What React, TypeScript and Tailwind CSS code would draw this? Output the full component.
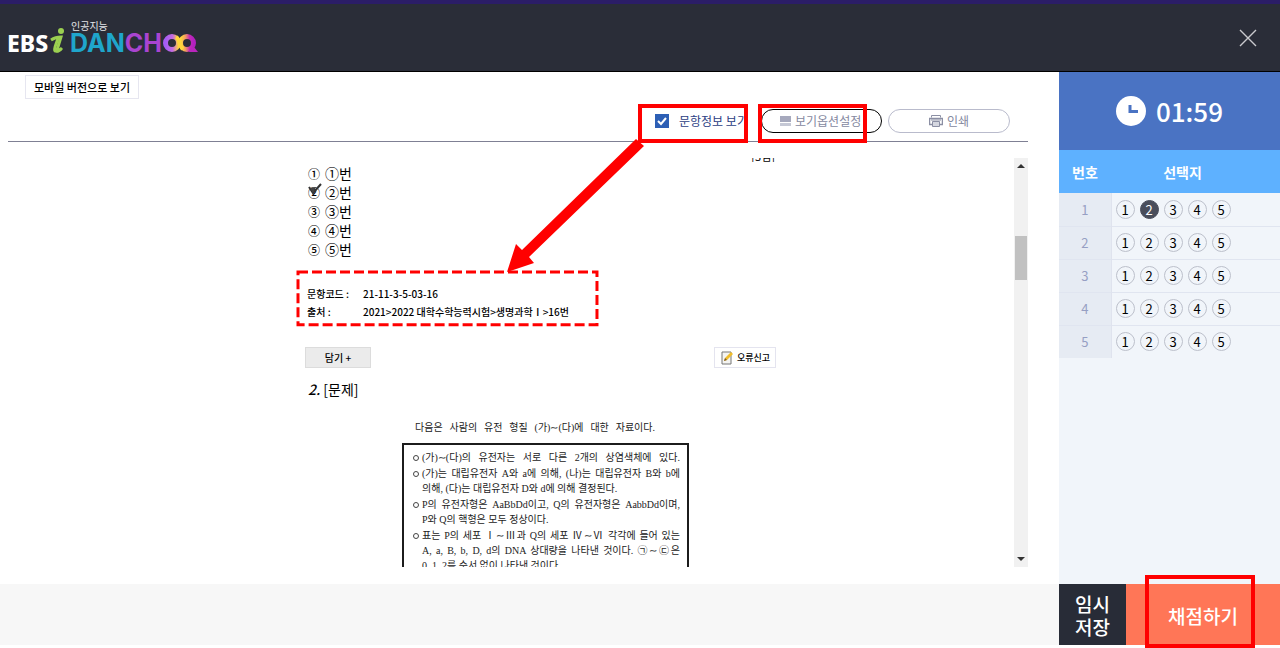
const options = ['①', '②', '③', '④', '⑤']
const questions = [1, 2, 3, 4, 5]
const choices = [1, 2, 3, 4, 5]

const passage = [
  ['(가)∼(다)의 유전자는 서로 다른 2개의 상염색체에 있다.'],
  ['(가)는 대립유전자 A와 a에 의해, (나)는 대립유전자 B와 b에', '의해, (다)는 대립유전자 D와 d에 의해 결정된다.'],
  ['P의 유전자형은 AaBbDd이고, Q의 유전자형은 AabbDd이며,', 'P와 Q의 핵형은 모두 정상이다.'],
  [
    '표는 P의 세포 Ⅰ∼Ⅲ과 Q의 세포 Ⅳ∼Ⅵ 각각에 들어 있는',
    'A, a, B, b, D, d의 DNA 상대량을 나타낸 것이다. ㉠∼㉢은',
    '0, 1, 2를 순서 없이 나타낸 것이다.',
  ],
]

function Logo() {
  return (
    <svg width="192" height="36" viewBox="0 0 192 36" className="overflow-visible" role="img" aria-label="EBSi DANCHOO">
      <defs>
        <linearGradient id="ringLeft" x1="0" y1="0" x2="1" y2="0">
          <stop offset="0" stopColor="#a65cf5" />
          <stop offset="0.55" stopColor="#c56be0" />
          <stop offset="1" stopColor="#ffd23e" />
        </linearGradient>
        <linearGradient id="ringRight" x1="0" y1="0" x2="1" y2="0">
          <stop offset="0" stopColor="#ffdb3a" />
          <stop offset="0.35" stopColor="#f5a45a" />
          <stop offset="0.7" stopColor="#c42ab8" />
          <stop offset="1" stopColor="#b320c0" />
        </linearGradient>
      </defs>
      <text x="-1" y="32" fill="#fff" fontSize="23" fontWeight="800" fontFamily="Noto Sans, sans-serif">EBS</text>
      <path d="M43 20c3-2 6-3 10-3l-4 13c0 2 2 1 4-1" fill="none" stroke="#9bd051" strokeWidth="3" />
      <path d="M50 18c-1 5-5 11-3 13 2 1 5-1 7-3" fill="none" stroke="#9bd051" strokeWidth="3" />
      <circle cx="53" cy="11" r="3" fill="#9bd051" />
      <text x="63" y="10" fill="#e4e5e8" fontSize="10" fontFamily="Noto Sans CJK KR, sans-serif">인공지능</text>
      <text x="62" y="32" fontSize="25" fontWeight="700" fontFamily="Inter, sans-serif">
        <tspan fill="#1fa5cb">DAN</tspan><tspan fill="#a944d0">CH</tspan>
      </text>
      <circle cx="164" cy="23" r="6.500" fill="none" stroke="url(#ringLeft)" strokeWidth="5" />
      <circle cx="179" cy="23" r="6.500" fill="none" stroke="url(#ringRight)" strokeWidth="5" />
      <path d="M168 17c4 2 3 9 7 12" fill="none" stroke="#ffd53c" strokeWidth="4" />
      <path d="M182 29l4-2 4 5h-9z" fill="#b925bd" />
    </svg>
  )
}

function Header() {
  return (
    <header className="flex h-18 shrink-0 items-center justify-between border-t-4 border-b border-t-[#2b1d67] border-b-black bg-[#2a2d38] pr-5 pl-2">
      <a href="#home">
        <Logo />
      </a>
      <button type="button" aria-label="닫기" className="p-1">
        <svg className="size-4 overflow-visible" viewBox="0 0 16 16" stroke="#c9cace" strokeWidth="1.4">
          <path d="M0 0l16 16M16 0L0 16" />
        </svg>
      </button>
    </header>
  )
}

function Toolbar() {
  return (
    <div className="relative mr-[31px] ml-2 shrink-0 border-b border-[#7f8094] pt-[3px]">
      <button type="button" className="ml-[17px] block h-6 border border-[#e6e6f0] px-2 text-[11px] leading-none font-medium text-black">
        모바일 버전으로 보기
      </button>
      <div className="mt-[10px] mb-2 flex h-6 items-center justify-end gap-1.5 pr-[18px] text-xs">
        <div className="relative mr-[10px] flex items-center">
          <input id="info" type="checkbox" defaultChecked className="size-[14px] appearance-none bg-[#2d5fb5]" />
          <svg className="pointer-events-none absolute left-0 size-[14px]" viewBox="0 0 14 14" fill="none" stroke="#fff" strokeWidth="2">
            <path d="M3 7l3 3 5-6" />
          </svg>
          <label htmlFor="info" className="ml-[10px] w-[66px] overflow-hidden whitespace-nowrap text-[#2c4083]">
            문항정보 보기
          </label>
          <span className="absolute -top-[9px] -right-[3px] -left-[17px] h-[39px] border-4 border-[#ff0000]" />
        </div>
        <div className="relative">
          <button type="button" className="flex h-6 w-[121px] items-center gap-1 rounded-full border border-black pl-[18px] text-[#85899f]">
            <svg width="11" height="10" viewBox="0 0 11 10">
              <path fill="#a6a9bd" d="M0 0h11v6H0z" />
              <path fill="#c5c8d5" d="M0 7h11v3H0z" />
            </svg>
            보기옵션설정
          </button>
          <span className="absolute -top-[5px] -left-[3px] h-[39px] w-[109px] border-4 border-[#ff0000]" />
        </div>
        <button type="button" className="flex h-6 w-[122px] items-center justify-center gap-1 rounded-full border border-[#b9bbcc] text-[#85899f]">
          <svg width="14" height="12" viewBox="0 0 14 12" fill="none" stroke="#8b8fa4">
            <path d="M2.500 2.500v-2h9v2" />
            <path d="M3 9.500H.5v-6h13v6H11" strokeWidth="1.500" />
            <path d="M3.500 6.500h7v5h-7z" fill="#d5d7e0" />
            <path d="M2 5h10" />
          </svg>
          인쇄
        </button>
      </div>
    </div>
  )
}

function AnswerOptions() {
  return (
    <ul className="mt-0.5 pl-[3px] text-black">
      {options.map((mark, i) => (
        <li key={mark} className="h-[19px]">
          <label className="relative flex w-fit items-center gap-[5px] text-sm leading-[19px]">
            <input type="radio" name="answer" defaultChecked={i === 1} className="sr-only" />
            <span className="text-xs leading-[19px] font-medium">{mark}</span>
            <span>{mark}번</span>
            {i === 1 && (
              <svg className="absolute top-px left-0 overflow-visible" width="14" height="14" viewBox="0 0 14 14">
                <path d="M1 3l4 6 8-9" fill="none" stroke="#333" strokeWidth="2" />
                <path d="M2 4l6-1-3 6z" fill="#444" />
              </svg>
            )}
          </label>
        </li>
      ))}
    </ul>
  )
}

function QuestionInfo() {
  return (
    <div className="relative -ml-[9px] mt-3 h-14 w-[302px] pt-[14px] pl-[11px] text-[10px] leading-[18px] font-medium text-black">
      <svg className="absolute inset-0 size-full overflow-visible">
        <rect x="2" y="1" width="99%" height="94%" fill="none" stroke="#ff0000" strokeWidth="3" strokeDasharray="10 4" />
      </svg>
      <dl className="relative grid grid-cols-[56px_1fr]">
        <dt>문항코드 :</dt>
        <dd>21-11-3-5-03-16</dd>
        <dt>출처 :</dt>
        <dd className="whitespace-nowrap">2021&gt;2022 대학수학능력시험&gt;생명과학Ⅰ&gt;16번</dd>
      </dl>
    </div>
  )
}

function Scrollbar() {
  return (
    <div className="flex w-[14px] shrink-0 flex-col items-center justify-between bg-[#f1f1f1] py-1.5">
      <svg width="8" height="4" viewBox="0 0 8 4">
        <path d="M4 0l4 4H0z" fill="#333" />
      </svg>
      <div className="flex w-full flex-1 flex-col items-center pt-[68px]">
        <div className="h-11 w-3 bg-[#c1c1c1]" />
      </div>
      <svg width="8" height="4" viewBox="0 0 8 4">
        <path d="M4 4l4-4H0z" fill="#333" />
      </svg>
    </div>
  )
}

function Passage() {
  return (
    <div className="mt-[21px] ml-[97px] w-[287px] font-['Liberation_Serif','Noto_Sans_CJK_KR',serif] text-[10px] leading-[15px] text-[#222]">
      <p className="ml-[13px] w-60 [text-align-last:justify]">다음은 사람의 유전 형질 (가)∼(다)에 대한 자료이다.</p>
      <ul className="mt-2 flex h-60 flex-col gap-px border-2 border-[#1c1c1c] pt-[5px] pr-[7px] pl-[9px]">
        {passage.map((lines, n) => (
          <li key={n} className="flex gap-[3px]">
            <span className="mt-[5px] size-1.5 shrink-0 rounded-full border border-[#444]" />
            <p className="flex-1">
              {lines.map((line, i) => (
                <span key={line} className={i > 0 && i === lines.length - 1 ? 'block' : 'block [text-align-last:justify]'}>
                  {line}
                </span>
              ))}
            </p>
          </li>
        ))}
      </ul>
    </div>
  )
}

function QuestionPaper() {
  return (
    <div className="mt-4 mr-[31px] mb-[17px] ml-2 flex min-h-0 flex-1">
      <div className="flex-1 overflow-hidden">
        <div className="ml-[297px] w-[471px]">
          <div className="flex h-1 items-end justify-end overflow-hidden pr-px text-[11px] leading-3">[3점]</div>
          <AnswerOptions />
          <QuestionInfo />
          <div className="mt-5 flex justify-between">
            <button type="button" className="h-[21px] w-[66px] border border-[#dcdcdc] bg-[#ebebeb] text-[10px] leading-none font-medium text-black">
              담기 +
            </button>
            <button type="button" className="flex h-[21px] w-[62px] items-center gap-1 border border-[#e4e4ef] pl-1.5 text-[9px] font-medium whitespace-nowrap text-black">
              <svg width="12" height="14" viewBox="0 0 12 14" className="shrink-0">
                <path d="M1 1h9v12H1z" fill="#f4f4f2" stroke="#777" />
                <path d="M3 10l1-3 6-6 2 2-6 6z" fill="#f0bd2c" />
                <path d="M3 10l1-3 2 2z" fill="#7b5a2b" />
              </svg>
              오류신고
            </button>
          </div>
          <p className="mt-[11px] pl-[3px] text-sm leading-5 text-black">
            <i className="font-medium">2.</i> [문제]
          </p>
          <Passage />
        </div>
      </div>
      <Scrollbar />
    </div>
  )
}

function AnswerSheet() {
  return (
    <aside className="flex w-[221px] shrink-0 flex-col bg-[#f1f5fa]">
      <div className="flex h-[78px] items-center justify-center gap-[10px] bg-[#4a73c3] text-white">
        <svg width="30" height="30" viewBox="0 0 30 30">
          <circle cx="15" cy="15" r="15" fill="#fff" />
          <path d="M14 9v6.500h8" fill="none" stroke="#4a73c3" strokeWidth="3" />
        </svg>
        <span className="text-[26px] leading-none font-medium">01:59</span>
      </div>
      <table className="w-full border-collapse">
        <thead>
          <tr className="h-[43px] bg-[#5eb1ff] text-sm text-white">
            <th className="w-[52px] font-bold">번호</th>
            <th className="pr-[26px] font-bold">선택지</th>
          </tr>
        </thead>
        <tbody>
          {questions.map((q) => (
            <tr key={q} className="h-[33px] border-b border-[#e0e5f0] last:border-0">
              <th className="border-r border-[#dfe3ee] bg-[#e6ebf3] text-[13px] font-normal text-[#969fc3]">{q}</th>
              <td className="pl-1">
                <div className="flex gap-[5px]">
                  {choices.map((c) => (
                    <label
                      key={c}
                      className="relative flex size-[19px] items-center justify-center rounded-full border border-[#bcc0cb] text-[13px] leading-none text-black has-checked:border-[#494d5b] has-checked:bg-[#494d5b] has-checked:text-white"
                    >
                      <input type="radio" name={`q${q}`} defaultChecked={q === 1 && c === 2} className="sr-only" />
                      {c}
                    </label>
                  ))}
                </div>
              </td>
            </tr>
          ))}
        </tbody>
      </table>
    </aside>
  )
}

function Footer() {
  return (
    <footer className="mb-[3px] flex h-[61px] shrink-0 bg-[#f7f7f7]">
      <div className="flex-1" />
      <button type="button" className="w-[67px] bg-[#282c37] px-3 text-[19px] leading-[23px] font-medium text-white">
        임시 저장
      </button>
      <button type="button" className="relative w-[154px] bg-[#ff7657] pt-1 text-[19px] font-medium text-white">
        채점하기
        <span className="absolute -top-[9px] left-[19px] h-[73px] w-[110px] border-4 border-[#ff0000]" />
      </button>
    </footer>
  )
}

export default function App() {
  return (
    <div className="flex h-screen min-h-[640px] flex-col bg-white font-['Noto_Sans_CJK_KR','Noto_Sans',sans-serif]">
      <Header />
      <div className="flex min-h-0 flex-1">
        <main className="relative flex min-w-0 flex-1 flex-col">
          <Toolbar />
          <QuestionPaper />
          <svg className="pointer-events-none absolute top-[66px] left-[507px]" width="138" height="134" viewBox="0 0 138 134">
            <path d="M129 1L137 8 22 119l5 6L0 134l9-28 6 6z" fill="#ff0000" />
          </svg>
        </main>
        <AnswerSheet />
      </div>
      <Footer />
    </div>
  )
}
